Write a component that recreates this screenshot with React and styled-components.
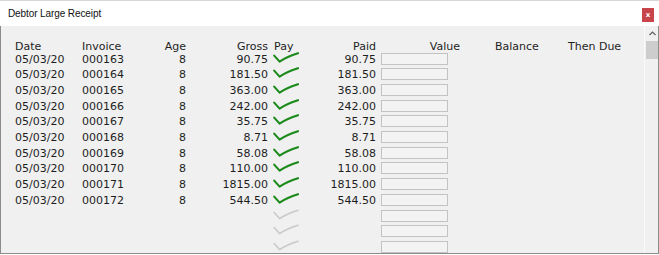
import React from "react";
import styled, { createGlobalStyle } from "styled-components";

const GlobalStyle = createGlobalStyle`
  html, body { margin: 0; padding: 0; background: #ffffff; }
  #root { width: 659px; }
`;

const Window = styled.div`
  width: 659px;
  height: 254px;
  display: flex;
  flex-direction: column;
  box-sizing: border-box;
`;

const TitleBar = styled.div`
  height: 26px;
  box-sizing: border-box;
  border-top: 1px solid #d6d6d6;
  background: #ffffff;
  display: flex;
  align-items: flex-start;
  justify-content: space-between;
  padding: 0 5px 0 8px;
`;

const Title = styled.span`
  font-family: "Liberation Sans", Arial, sans-serif;
  font-size: 10px;
  letter-spacing: -0.1px;
  color: #111111;
  line-height: 25px;
`;

const CloseButton = styled.div`
  margin-top: 7px;
  width: 12px;
  height: 14px;
  background: #c8444b;
  color: #ffffff;
  font-family: "DejaVu Sans", sans-serif;
  font-size: 7px;
  font-weight: bold;
  display: flex;
  align-items: center;
  justify-content: center;
`;

const Body = styled.div`
  flex: 1;
  display: flex;
  min-height: 0;
  background: #f0f0f0;
  border: 1px solid #8c8c8c;
  border-top: none;
  overflow: hidden;
`;

const Content = styled.div`
  flex: 1;
  padding: 15.65px 0 0 14px;
  overflow: hidden;
  font-family: "DejaVu Sans", Verdana, sans-serif;
  font-size: 11px;
  color: #1e1e1e;
`;

const Row = styled.div`
  display: grid;
  grid-template-columns: 67px 58px 46px 82px 32px 76px 84px 108px auto;
  height: ${(p) => (p.$header ? "10px" : "15.7px")};
  line-height: ${(p) => (p.$header ? "10px" : "15.7px")};
  white-space: nowrap;
`;

const Cell = styled.div`
  text-align: ${(p) => p.$align || "left"};
  padding-left: ${(p) => p.$pl || 0}px;
`;

const CheckCell = styled.div`
  padding-left: 5px;
  height: 15.7px;
`;

const TextBox = styled.div`
  margin: 1px 0 0 5px;
  width: 67px;
  height: 12px;
  box-sizing: border-box;
  border: 1px solid #c3c3c3;
  background: #f3f3f3;
`;

const Scrollbar = styled.div`
  width: 14px;
  box-sizing: border-box;
  border-left: 1px solid #fafafa;
  background: #f0f0f0;
  display: flex;
  flex-direction: column;
  align-items: stretch;
`;

const ScrollArrow = styled.div`
  height: 14px;
  display: flex;
  align-items: center;
  justify-content: center;
  padding-left: 1px;
`;

const Thumb = styled.div`
  margin: 1px 0 0 1px;
  height: 18px;
  background: #cdcdcd;
`;

const Check = ({ active }) => (
  <svg width="26" height="15" viewBox="0 0 26 15" style={{ display: "block" }}>
    <path
      d="M1.2,3.6 L6.6,9.6 Q14,4.5 25,1.2"
      fill="none"
      stroke={active ? "#1b8a1b" : "#c9c9c9"}
      strokeWidth={active ? 2.1 : 1.5}
      strokeLinecap="round"
      strokeLinejoin="round"
    />
  </svg>
);

const rows = [
  ["05/03/20", "000163", "8", "90.75"],
  ["05/03/20", "000164", "8", "181.50"],
  ["05/03/20", "000165", "8", "363.00"],
  ["05/03/20", "000166", "8", "242.00"],
  ["05/03/20", "000167", "8", "35.75"],
  ["05/03/20", "000168", "8", "8.71"],
  ["05/03/20", "000169", "8", "58.08"],
  ["05/03/20", "000170", "8", "110.00"],
  ["05/03/20", "000171", "8", "1815.00"],
  ["05/03/20", "000172", "8", "544.50"],
  null,
  null,
  null,
];

export default function App() {
  return (
    <>
      <GlobalStyle />
      <Window>
        <TitleBar>
          <Title>Debtor Large Receipt</Title>
          <CloseButton>x</CloseButton>
        </TitleBar>
        <Body>
          <Content>
            <Row $header>
              <Cell>Date</Cell>
              <Cell>Invoice</Cell>
              <Cell $align="right">Age</Cell>
              <Cell $align="right">Gross</Cell>
              <Cell $pl={6}>Pay</Cell>
              <Cell $align="right">Paid</Cell>
              <Cell $align="right">Value</Cell>
              <Cell $pl={35}>Balance</Cell>
              <Cell>Then Due</Cell>
            </Row>
            {rows.map((r, i) => (
              <Row key={i}>
                <Cell>{r ? r[0] : ""}</Cell>
                <Cell>{r ? r[1] : ""}</Cell>
                <Cell $align="right">{r ? r[2] : ""}</Cell>
                <Cell $align="right">{r ? r[3] : ""}</Cell>
                <CheckCell>
                  <Check active={!!r} />
                </CheckCell>
                <Cell $align="right">{r ? r[3] : ""}</Cell>
                <div>
                  <TextBox />
                </div>
                <Cell />
                <Cell />
              </Row>
            ))}
          </Content>
          <Scrollbar>
            <ScrollArrow>
              <svg width="7" height="5" viewBox="0 0 7 5">
                <polyline points="0.5,4 3.5,1 6.5,4" fill="none" stroke="#606060" strokeWidth="1.2" />
              </svg>
            </ScrollArrow>
            <Thumb />
          </Scrollbar>
        </Body>
      </Window>
    </>
  );
}
